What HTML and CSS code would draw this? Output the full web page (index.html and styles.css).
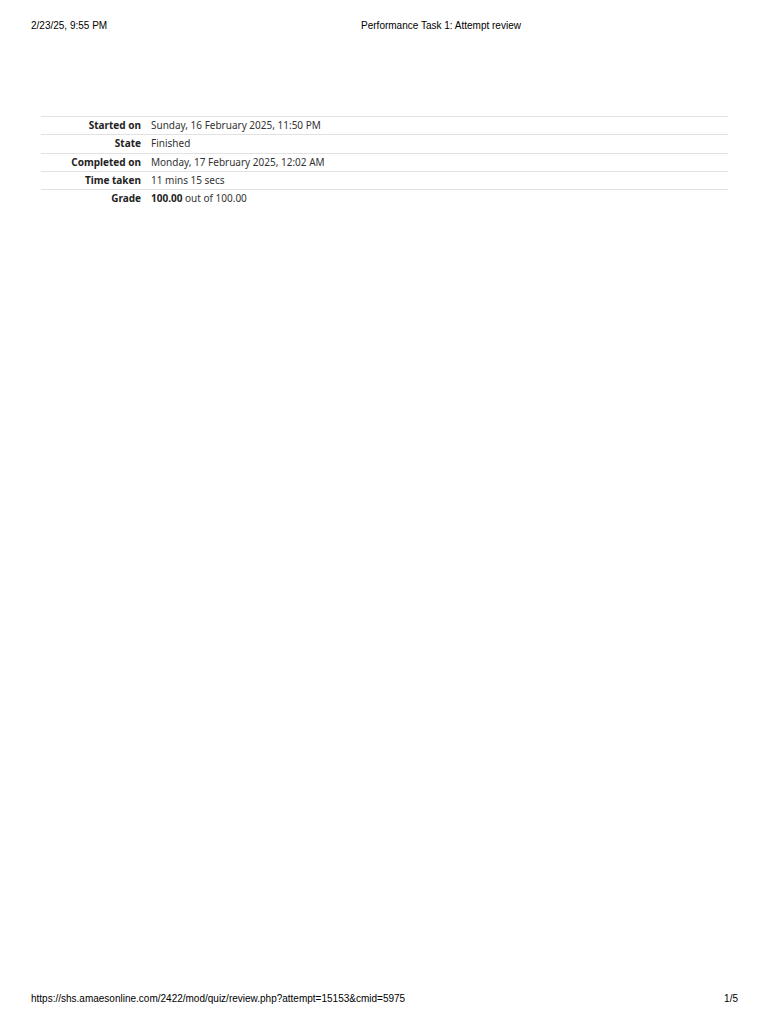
FILE: index.html
```html
<!DOCTYPE html>
<html>
<head>
<meta charset="utf-8">
<title>Performance Task 1: Attempt review</title>
<link rel="stylesheet" href="styles.css">
</head>
<body>
<div class="page">
  <header class="print-head">
    <span class="date">2/23/25, 9:55 PM</span>
    <span class="title">Performance Task 1: Attempt review</span>
  </header>
  <main class="content">
    <table class="summary">
      <tbody>
        <tr><th>Started on</th><td>Sunday, 16 February 2025, 11:50 PM</td></tr>
        <tr><th>State</th><td>Finished</td></tr>
        <tr><th>Completed on</th><td>Monday, 17 February 2025, 12:02 AM</td></tr>
        <tr><th>Time taken</th><td>11 mins 15 secs</td></tr>
        <tr><th>Grade</th><td><b>100.00</b> out of 100.00</td></tr>
      </tbody>
    </table>
  </main>
  <footer class="print-foot">
    <span class="url">https://shs.amaesonline.com/2422/mod/quiz/review.php?attempt=15153&amp;cmid=5975</span>
    <span class="pages">1/5</span>
  </footer>
</div>
</body>
</html>
```

FILE: styles.css
```css
html, body {
  margin: 0;
  padding: 0;
  background: #fff;
}
.page {
  display: flex;
  flex-direction: column;
  height: 1024px;
  box-sizing: border-box;
}
.print-head, .print-foot {
  display: flex;
  font-family: "Liberation Sans", Arial, sans-serif;
  font-size: 10px;
  line-height: 12px;
  color: #000;
  padding: 0 30px 0 31px;
}
.print-head {
  padding-top: 20px;
}
.print-head .date {
  width: 113px;
}
.print-head .title {
  flex: 1;
  text-align: center;
}
.content {
  padding: 84px 40px 0 41px;
}
.summary {
  width: 100%;
  border-collapse: collapse;
  font-family: "Noto Sans", "Open Sans", sans-serif;
  font-size: 10px;
  color: #333;
}
.summary tr {
  border-top: 1px solid #e2e2e2;
}
.summary th, .summary td {
  height: 17.3px;
  padding: 0 4px;
  vertical-align: middle;
  line-height: 13px;
}
.summary th {
  width: 96px;
  text-align: right;
  font-weight: 700;
  color: #222;
  padding-right: 5px;
}
.summary td {
  text-align: left;
  padding-left: 5px;
}
.summary td b {
  color: #222;
}
.print-foot {
  margin-top: auto;
  padding-bottom: 19px;
  justify-content: space-between;
}
```
